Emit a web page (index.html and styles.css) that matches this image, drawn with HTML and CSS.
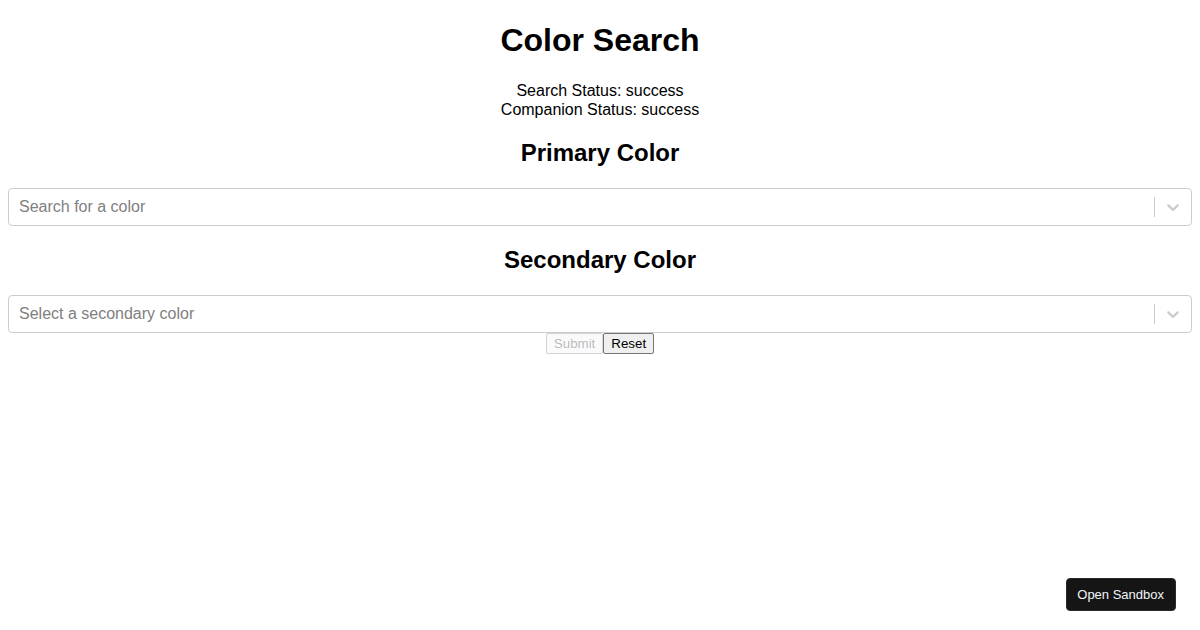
FILE: index.html
```html
<!DOCTYPE html>
<html>
<head>
<meta charset="utf-8">
<title>Color Search</title>
<link rel="stylesheet" href="styles.css">
</head>
<body>
<div class="app">
  <h1 class="title">Color Search</h1>
  <div class="status">Search Status: success</div>
  <div class="status">Companion Status: success</div>
  <h2 class="section">Primary Color</h2>
  <div class="select">
    <div class="value"><span class="placeholder">Search for a color</span></div>
    <div class="indicators">
      <span class="sep"></span>
      <span class="ind"><svg class="chev" viewBox="0 0 20 20" width="20" height="20" aria-hidden="true"><path d="M4.516 7.548c0.436-0.446 1.043-0.481 1.576 0l3.908 3.747 3.908-3.747c0.533-0.481 1.141-0.446 1.574 0 0.436 0.445 0.408 1.197 0 1.615-0.406 0.418-4.695 4.502-4.695 4.502-0.217 0.223-0.502 0.335-0.787 0.335s-0.57-0.112-0.789-0.335c0 0-4.287-4.084-4.695-4.502s-0.436-1.170 0-1.615z"></path></svg></span>
    </div>
  </div>
  <h2 class="section">Secondary Color</h2>
  <div class="select">
    <div class="value"><span class="placeholder">Select a secondary color</span></div>
    <div class="indicators">
      <span class="sep"></span>
      <span class="ind"><svg class="chev" viewBox="0 0 20 20" width="20" height="20" aria-hidden="true"><path d="M4.516 7.548c0.436-0.446 1.043-0.481 1.576 0l3.908 3.747 3.908-3.747c0.533-0.481 1.141-0.446 1.574 0 0.436 0.445 0.408 1.197 0 1.615-0.406 0.418-4.695 4.502-4.695 4.502-0.217 0.223-0.502 0.335-0.787 0.335s-0.57-0.112-0.789-0.335c0 0-4.287-4.084-4.695-4.502s-0.436-1.170 0-1.615z"></path></svg></span>
    </div>
  </div>
  <div class="actions">
    <button class="btn" disabled>Submit</button><button class="btn">Reset</button>
  </div>
</div>
<a class="sandbox">Open Sandbox</a>
</body>
</html>
```
FILE: styles.css
```css
html, body {
  margin: 0;
  padding: 0;
}
body {
  font-family: "Liberation Sans", Arial, sans-serif;
  font-size: 16px;
  color: #000;
  background: #fff;
}
.app {
  text-align: center;
  padding: 22px 8px 0;
}
.title {
  font-size: 32px;
  font-weight: bold;
  line-height: 36.8px;
  margin: 0 0 22px;
}
.status {
  line-height: 19px;
}
.section {
  font-size: 24px;
  font-weight: bold;
  line-height: 27.6px;
  margin: 20.3px 0 21.2px;
}
.select {
  display: flex;
  align-items: center;
  justify-content: space-between;
  min-height: 38px;
  box-sizing: border-box;
  border: 1px solid hsl(0, 0%, 80%);
  border-radius: 4px;
  background: #fff;
  text-align: left;
}
.value {
  flex: 1;
  padding: 2px 8px;
  display: flex;
  align-items: center;
}
.placeholder {
  color: hsl(0, 0%, 50%);
  margin: 0 2px;
  padding: 2px 0;
}
.indicators {
  display: flex;
  align-self: stretch;
  align-items: center;
}
.sep {
  align-self: stretch;
  width: 1px;
  margin: 8px 0;
  background: hsl(0, 0%, 80%);
}
.ind {
  display: flex;
  padding: 8px;
}
.chev {
  fill: hsl(0, 0%, 80%);
}
.actions {
  display: flex;
  justify-content: center;
}
.btn {
  font-family: "Liberation Sans", Arial, sans-serif;
  font-size: 13.333px;
  padding: 2px 7px;
  border: 1px solid #767676;
  border-radius: 2px;
  background: #efefef;
  color: #000;
  line-height: normal;
}
.btn:disabled {
  color: rgba(16, 16, 16, 0.3);
  border-color: rgba(118, 118, 118, 0.3);
  background: rgba(239, 239, 239, 0.3);
}
.sandbox {
  position: fixed;
  right: 24px;
  bottom: 19px;
  background: #151515;
  color: #f2f4f8;
  font-family: "Liberation Sans", Arial, sans-serif;
  font-size: 13px;
  padding: 0 11px 0 10.5px;
  border-radius: 4px;
  line-height: 31px;
  border: 1px solid #2a2a2a;
}
```
